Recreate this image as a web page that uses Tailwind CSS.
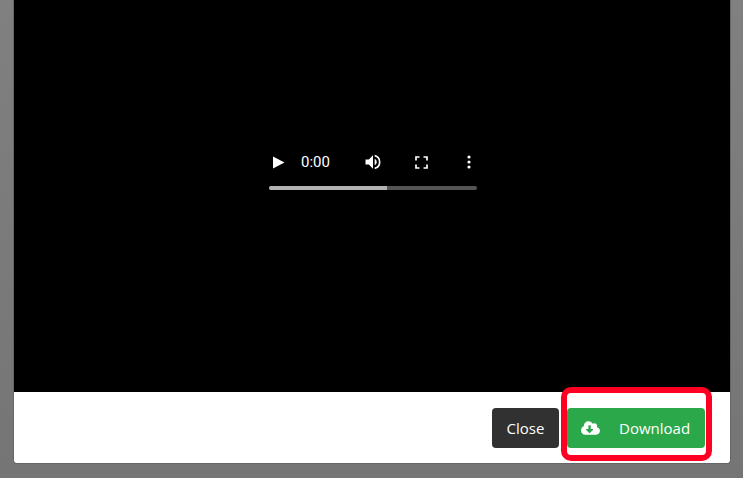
<!DOCTYPE html>
<html lang="en">
<head>
    <meta charset="UTF-8">
    <title>Audio modal</title>
    <script src="https://cdn.jsdelivr.net/npm/@tailwindcss/browser@4"></script>
</head>
<body class="h-[478px] w-[743px] overflow-hidden bg-linear-to-b from-[#808080] to-[#757575] font-['Open_Sans',sans-serif]">
    <div class="relative ml-[13px] flex h-[464px] w-[718px] flex-col overflow-hidden rounded-b-[4px] border border-t-0 border-[#666666] bg-white">
        <!-- player -->
        <div class="h-[392px] bg-black pt-[150px]">
            <div class="ml-[255px] w-[208px]">
                <div class="flex h-[24px] items-center">
                    <svg class="ml-[3px] h-[13px] w-[13px]" viewBox="0 0 13 13"><path d="M1 0.5 12.5 6.500 1 12.500z" fill="#fff"/></svg>
                    <span class="ml-[16px] w-[29px] font-['Roboto',sans-serif] text-[15px] leading-none text-white">0:00</span>
                    <svg class="ml-[33px] h-[20px] w-[20px]" viewBox="0 0 24 24"><path d="M3 9v6h4l5 5V4L7 9H3zm13.500 3A4.500 4.500 0 0 0 14 7.970v8.050A4.500 4.500 0 0 0 16.500 12zM14 3.230v2.060a7 7 0 0 1 0 13.420v2.060a9 9 0 0 0 0-17.540z" fill="#fff"/></svg>
                    <svg class="ml-[32px] h-[13px] w-[13px]" viewBox="0 0 13 13"><path d="M1 4.500V1h3.500M8.500 1H12v3.500M12 8.500V12H8.500M4.500 12H1V8.500" fill="none" stroke="#fff" stroke-width="1.700"/></svg>
                    <svg class="ml-[39px] h-[14px] w-[4px]" viewBox="0 0 4 14"><circle cx="2" cy="2" r="1.600" fill="#fff"/><circle cx="2" cy="7" r="1.600" fill="#fff"/><circle cx="2" cy="12" r="1.600" fill="#fff"/></svg>
                </div>
                <div class="mt-[12px] h-[4px] overflow-hidden rounded-full bg-[#555555]">
                    <div class="h-full w-[118px] bg-[#b3b3b3]"></div>
                </div>
            </div>
        </div>
        <!-- footer -->
        <div class="flex flex-1 items-start justify-end gap-[8px] pr-[25px] pt-[16px]">
            <button class="h-[40px] w-[67px] rounded-[4px] bg-[#313131] text-[15px] font-medium text-white">Close</button>
            <button class="flex h-[40px] w-[138px] items-center rounded-[4px] bg-[#2ba84a] pl-[14px] text-[15px] font-medium text-white">
                <svg class="h-[16px] w-[19px]" viewBox="0 0 640 512"><path d="M537.600 226.600c4.100-10.700 6.400-22.400 6.400-34.600 0-53-43-96-96-96-19.700 0-38.100 6-53.300 16.200C367 64.200 315.300 32 256 32c-88.400 0-160 71.600-160 160 0 2.700.1 5.400.2 8.100C40.200 219.800 0 273.200 0 336c0 79.500 64.500 144 144 144h368c70.700 0 128-57.300 128-128 0-61.900-44-113.600-102.400-125.400zm-132.900 88.700L299.300 420.700c-6.200 6.200-16.400 6.200-22.600 0L171.300 315.300c-10.100-10.100-2.900-27.300 11.300-27.300H248V176c0-8.800 7.200-16 16-16h48c8.800 0 16 7.200 16 16v112h65.400c14.200 0 21.400 17.200 11.300 27.300z" fill="#fff"/></svg>
                <span class="ml-[19px]">Download</span>
            </button>
        </div>
        <!-- annotation box -->
        <div class="absolute left-[547px] top-[387px] h-[74px] w-[151px] rounded-[10px] border-[6px] border-[#ff0022]"></div>
    </div>
</body>
</html>
